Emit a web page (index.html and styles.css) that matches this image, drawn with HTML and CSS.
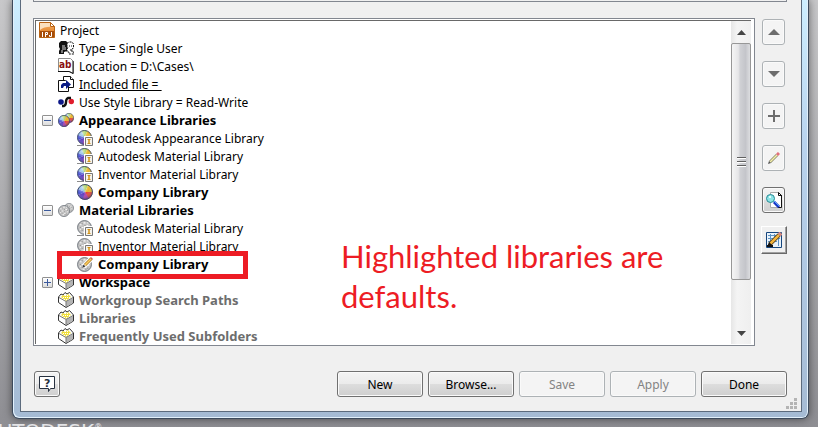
FILE: index.html
```html
<!DOCTYPE html>
<html lang="en">
<head>
   <meta charset="UTF-8">
   <meta name="viewport" content="width=device-width, initial-scale=1.0">
   <title>Projects</title>
   <link rel="stylesheet" href="styles.css">
</head>
<body>
   <!-- Shared icons -->
   <svg class="sprite" aria-hidden="true">
      <defs>
         <radialGradient id="shine" cx="35%" cy="20%" r="85%">
            <stop offset="0" stop-color="#fff" stop-opacity=".65"/>
            <stop offset=".5" stop-color="#fff" stop-opacity="0"/>
            <stop offset="1" stop-color="#102050" stop-opacity=".5"/>
         </radialGradient>
         <linearGradient id="orange" x1="0" y1="0" x2="0" y2="1">
            <stop offset="0" stop-color="#f7b26a"/>
            <stop offset="1" stop-color="#d9700f"/>
         </linearGradient>
      </defs>
      <symbol id="ball" viewBox="0 0 16 16">
         <path fill="#4a55d0" d="M8 8 1 11A7.500 7.500 0 0 1 1 5z"/>
         <path fill="#69a7dc" d="M8 8 1 5A7.500 7.500 0 0 1 6 .8z"/>
         <path fill="#8fc63c" d="M8 8 5 .8A7.500 7.500 0 0 1 11 1z"/>
         <path fill="#e8b52a" d="M8 8 11 1A7.500 7.500 0 0 1 15.500 8z"/>
         <path fill="#e8442e" d="M8 8h7.500A7.500 7.500 0 0 1 11 15z"/>
         <path fill="#b03aa8" d="M8 8l4 6.500A7.500 7.500 0 0 1 5 15z"/>
         <path fill="#5a3ec0" d="M8 8 6 15.300A7.500 7.500 0 0 1 1 11z"/>
         <circle cx="8" cy="8" r="7.500" fill="url(#shine)" stroke="#44506e"/>
      </symbol>
      <symbol id="stone" viewBox="0 0 16 16">
         <circle cx="8" cy="8" r="7.400" fill="#c4c4c4" stroke="#6a7078"/>
         <path stroke="#f8f8f8" stroke-width="1.200" d="M3 5h2M7 3h2M5 8h2M10 6h2M3 10h1M8 11h2M12 9h1M6 13h2M11 3h1"/>
         <path stroke="#808080" d="M5 4h1M8 6h1M3 8h1M8 9h1M12 7h1M5 11h1M11 12h1M9 13h1"/>
      </symbol>
      <symbol id="badge" viewBox="0 0 16 16">
         <path fill="#fff" d="M7 6h9v10H7z"/>
         <path fill="#f4f2ec" stroke="#777" d="M8.500 7.500h7v8h-7z"/>
         <path fill="none" stroke="#d29318" d="M10.500 9.500h3M10.500 13.500h3"/>
         <path stroke="#d29318" stroke-width="1.500" d="M12 9v5"/>
         <path stroke="#8b8b8b" d="M0 15.500h7"/>
      </symbol>
      <symbol id="color-lib" viewBox="0 0 16 16">
         <use href="#ball" width="15" height="15"/>
         <use href="#badge"/>
      </symbol>
      <symbol id="stone-lib" viewBox="0 0 16 16">
         <use href="#stone" width="15" height="15"/>
         <use href="#badge"/>
      </symbol>
      <symbol id="color-group" viewBox="0 0 16 16">
         <use href="#ball" x="6" y="1" width="10" height="10"/>
         <use href="#ball" y="3" width="12" height="12"/>
      </symbol>
      <symbol id="stone-group" viewBox="0 0 16 16">
         <use href="#stone" x="6" y="1" width="10" height="10"/>
         <use href="#stone" y="3" width="12" height="12"/>
      </symbol>
      <symbol id="stone-edit" viewBox="0 0 16 16">
         <use href="#stone" y="1" width="15" height="15"/>
         <path stroke="#fff" stroke-width="5" d="m7 10 8-8"/>
         <path stroke="#a87618" stroke-width="3" d="m8 9 6-6"/>
         <path stroke="#ffce62" stroke-width="1.600" d="m8 9 6-6"/>
         <path fill="#333" d="m5.500 11.500 1-3 2 2z"/>
         <path stroke="#c7654c" stroke-width="3" d="m14 3 1-1"/>
      </symbol>
      <symbol id="box" viewBox="0 0 16 16">
         <path fill="#fff" stroke="#333" d="M.500 5 3 2l2 1 2-2.500 2 1.500 2.500-1.500 4 4.500v6L8 15.500.500 10.500z"/>
         <path fill="#b4b4b4" d="M8 9.500 15 6v5l-7 4z"/>
         <path fill="#f0df3c" d="m3 5 2-2 2 1 3-2 3 3-5 4z"/>
         <path stroke="#fff" stroke-dasharray="1 1" d="M5 5.500h8M6 7.500h5M7 3.500h4"/>
         <path fill="none" stroke="#777" d="m1 5.500 7 4 7-4M8 10v5"/>
      </symbol>
      <symbol id="ipj" viewBox="0 0 16 16">
         <path fill="url(#orange)" stroke="#b96314" d="M.500.500h11l4 4v11H.500z"/>
         <path fill="#fbe0bf" d="M1 1h10l3 4Q6 4 1 8z"/>
         <path fill="#fff" stroke="#b96314" d="M11.500.500v4h4z"/>
         <path fill="#a74c08" d="M1 9h14v6H1z"/>
         <path fill="none" stroke="#fff" d="M3.500 10v5M6.500 15v-4.500h2v2h-2M12.500 10v4.500h-2V13"/>
      </symbol>
      <symbol id="users" viewBox="0 0 16 16">
         <path fill="#111" d="M1 3 3 1h5l2 2v3L9 8v3l-3 1v2H1v-3l1-2-1-2z"/>
         <path fill="#777" d="M4 5h3v2h1v3H5v3H3v-3h1z"/>
         <path fill="#fff" stroke="#111" stroke-dasharray="2 1" d="M9 3.500 11 2h3l1.500 2v4L14 9v3h2v2h-5v-2H9V9l1-1-1-2z"/>
         <path stroke="#111" d="M11 6h1M13 6h1M12 10h2"/>
      </symbol>
      <symbol id="include" viewBox="0 0 16 16">
         <path fill="#fff" stroke="#111" d="M5.500.500h7l3 3v8h-10z"/>
         <path fill="#fff" stroke="#111" d="M12.500.500v3h3"/>
         <path fill="#fff" stroke="#111" d="M.500 4.500h7l3 3v8h-10z"/>
         <path fill="#0a1c86" d="M3 12V9l2-2h3V4l5 4.500L8 13v-3H6l-1 2z"/>
      </symbol>
      <symbol id="style" viewBox="0 0 16 16">
         <circle cx="3" cy="8" r="2.800" fill="#0c1788"/>
         <circle cx="13.300" cy="7.500" r="2.700" fill="#e01c2c"/>
         <path fill="none" stroke="#111" stroke-width="2.400" d="M4 12h2q2-1 2-4t2-4h3"/>
      </symbol>
   </svg>

   <div class="window">
      <main class="client">
         <div class="upper-pane"></div>

         <div class="middle">
            <div class="tree-frame">
               <ul class="tree">
                  <li class="row root"><svg class="icon"><use href="#ipj"/></svg>Project</li>
                  <li class="row"><svg class="icon"><use href="#users"/></svg>Type = Single User</li>
                  <li class="row"><svg class="icon"><path fill="#fff" stroke="#8d8d8d" d="M.500.500h12l3 3v12l-4-2H.500z"/><path fill="none" stroke="#111" d="M0 13.500h11l4 2V3"/><text x="1" y="10" class="icon-text">ab</text></svg>Location = D:\Cases\</li>
                  <li class="row"><svg class="icon"><use href="#include"/></svg><a href="#">Included file =&nbsp;</a></li>
                  <li class="row"><svg class="icon"><use href="#style"/></svg>Use Style Library = Read-Write</li>
                  <li class="row group bold"><button class="expander" aria-label="Collapse Appearance Libraries"></button><svg class="icon"><use href="#color-group"/></svg>Appearance Libraries</li>
                  <li class="row leaf"><svg class="icon"><use href="#color-lib"/></svg>Autodesk Appearance Library</li>
                  <li class="row leaf"><svg class="icon"><use href="#color-lib"/></svg>Autodesk Material Library</li>
                  <li class="row leaf"><svg class="icon"><use href="#color-lib"/></svg>Inventor Material Library</li>
                  <li class="row leaf bold"><svg class="icon"><use href="#ball"/></svg>Company Library</li>
                  <li class="row group bold"><button class="expander" aria-label="Collapse Material Libraries"></button><svg class="icon"><use href="#stone-group"/></svg>Material Libraries</li>
                  <li class="row leaf"><svg class="icon"><use href="#stone-lib"/></svg>Autodesk Material Library</li>
                  <li class="row leaf"><svg class="icon"><use href="#stone-lib"/></svg>Inventor Material Library</li>
                  <li class="row leaf bold marked"><svg class="icon"><use href="#stone-edit"/></svg>Company Library</li>
                  <li class="row group bold"><button class="expander closed" aria-label="Expand Workspace"></button><svg class="icon"><use href="#box"/></svg>Workspace</li>
                  <li class="row bold muted"><svg class="icon"><use href="#box"/></svg>Workgroup Search Paths</li>
                  <li class="row bold muted"><svg class="icon"><use href="#box"/></svg>Libraries</li>
                  <li class="row bold muted"><svg class="icon"><use href="#box"/></svg>Frequently Used Subfolders</li>
               </ul>
               <p class="note">Highlighted libraries are defaults.</p>
               <div class="scrollbar">
                  <button class="scroll-arrow" aria-label="Scroll up"><svg width="9" height="5"><path fill="#444" d="M0 5 4.500 0 9 5z"/></svg></button>
                  <div class="scroll-track"><div class="thumb"><span class="grip"></span></div></div>
                  <button class="scroll-arrow" aria-label="Scroll down"><svg width="9" height="5"><path fill="#444" d="M0 0h9L4.500 5z"/></svg></button>
               </div>
            </div>

            <div class="side">
               <button class="btn tool" disabled aria-label="Move up"><svg width="12" height="6"><path fill="#6d6d6d" d="M0 6 6 0l6 6z"/></svg></button>
               <button class="btn tool" disabled aria-label="Move down"><svg width="12" height="6"><path fill="#6d6d6d" d="M0 0h12L6 6z"/></svg></button>
               <button class="btn tool" disabled aria-label="Add"><svg width="12" height="12"><path stroke="#6d6d6d" stroke-width="2" d="M0 6h12M6 0v12"/></svg></button>
               <button class="btn tool" disabled aria-label="Edit"><svg width="12" height="12"><path stroke="#8a8a70" stroke-width="3" d="m2 10 7-7"/><path stroke="#f5f0a8" stroke-width="1.500" d="m2 10 7-7"/><path stroke="#e2707c" stroke-width="3" d="m9 3 2-2"/><path fill="#555" d="m0 12 1-3 2 2z"/></svg></button>
               <button class="btn tool" aria-label="Check paths"><svg width="16" height="16"><path fill="#fff" stroke="#aaa" d="M4.500.500h8l3 3v12h-11z"/><path fill="#fff" stroke="#111" d="M12.500.500v3h3zM15.500 3v12.500H12"/><path stroke="#1735c4" stroke-width="3" d="m8 10 5 5"/><path stroke="#59a3ff" d="m8 9 5 5"/><circle cx="4.500" cy="6.500" r="4" fill="#8de4e6" stroke="#268a94"/><path stroke="#e4ffff" stroke-width="2" d="M3 5h2"/></svg></button>
               <button class="tool classic" aria-label="Configure libraries"><svg width="16" height="16"><path fill="#e9f3fb" stroke="#16467e" d="M.500.500h15v15H.500z"/><path fill="none" stroke="#5d92c4" d="M2 3.500h12M2 6.500h12M2 9.500h9M4.500 2v12M8.500 2v8M12.500 2v12"/><path stroke="#4a3512" stroke-width="4" d="m4 12 9-9"/><path stroke="#f3b43c" stroke-width="2.500" d="m4 12 9-9"/><path stroke="#d58a80" stroke-width="4" d="m13 3 2-2"/><path fill="#111" d="m1 15 2-5 3 3z"/><path stroke="#111" stroke-width="2" d="M1 14h6"/></svg></button>
            </div>
         </div>

         <div class="footer">
            <button class="btn help" aria-label="Help"><svg width="16" height="16"><path fill="#fff" stroke="#26303e" d="M.500.500h15v12h-4l-2 3v-3h-9z"/><text x="5" y="11" class="help-text">?</text></svg></button>
            <button class="btn">New</button>
            <button class="btn">Browse...</button>
            <button class="btn" disabled>Save</button>
            <button class="btn" disabled>Apply</button>
            <button class="btn">Done</button>
         </div>
         <svg class="resize" width="11" height="11"><path stroke="#b4b4b4" stroke-width="3" stroke-dasharray="3 1" d="M8 1.500h3M4 5.500h7M0 9.500h11"/></svg>
      </main>
   </div>
   <div class="brand">AUTODESK<sup>®</sup></div>
</body>
</html>
```
FILE: styles.css
```css
*,
*::after {
   box-sizing: border-box;
}

body {
   margin: 0;
   height: 100vh;
   overflow: hidden;
   display: flex;
   flex-direction: column;
   font-family: "Noto Sans", sans-serif;
   font-size: 12px;
   color: #000;
   background: linear-gradient(#c8c8ca, #a5a5a8 60%, #8e8e93);
}

button {
   font: inherit;
   padding: 0;
}

svg {
   display: block;
}

.sprite {
   position: absolute;
   width: 0;
   height: 0;
}

/* Window frame */
.window {
   flex: 1;
   min-height: 0;
   display: flex;
   margin: 0 9px 0 12px;
   padding: 0 6px 6px 7px;
   border: 1px solid #3c4a5c;
   border-top: 0;
   border-radius: 0 0 7px 7px;
   background: linear-gradient(#cdeeff, #b9d3ee 35%, #a5bbd4);
   box-shadow: inset 1px -1px 0 #e2f0fb, inset -1px 0 0 #e2f0fb, 0 0 8px rgba(0, 0, 0, .5);
}

.client {
   position: relative;
   flex: 1;
   min-width: 0;
   display: flex;
   flex-direction: column;
   padding: 0 14px 14px 12px;
   border: 1px solid #5c6b7d;
   border-top: 0;
   background: #f0f0f0;
}

.upper-pane {
   height: 2px;
   border: 1px solid #828790;
   border-top: 0;
}

.middle {
   flex: 1;
   min-height: 0;
   display: flex;
   gap: 7px;
   margin-top: 16px;
}

/* Tree */
.tree-frame {
   position: relative;
   flex: 1;
   min-width: 0;
   display: flex;
   border: 1px solid #828790;
   padding: 1px 3px 1px 1px;
   background: #fff;
}

.tree {
   flex: 1;
   margin: 0;
   padding: 0;
   overflow: hidden;
   list-style: none;
   border-top: 1px solid #696969;
   border-left: 1px solid #696969;
}

.row {
   display: flex;
   align-items: center;
   gap: 5px;
   height: 18px;
   padding-left: 22px;
   white-space: nowrap;
}

.root {
   padding-left: 3px;
}

.group {
   padding-left: 6px;
}

.leaf {
   padding-left: 41px;
}

.bold {
   font-size: 13px;
   font-weight: bold;
}

.muted {
   color: #6d6d6d;
}

.row a {
   color: inherit;
}

.icon {
   width: 16px;
   height: 16px;
   flex: none;
}

.icon-text {
   font: bold 10px "DejaVu Sans Condensed", sans-serif;
   fill: #8b1010;
}

.expander {
   width: 11px;
   height: 11px;
   border: 1px solid #919191;
   border-radius: 1px;
   background: linear-gradient(#3c5a9c, #3c5a9c) center / 7px 1px no-repeat, linear-gradient(#fff, #dcdcdc);
}

.closed {
   background: linear-gradient(#3c5a9c, #3c5a9c) center / 7px 1px no-repeat, linear-gradient(#3c5a9c, #3c5a9c) center / 1px 7px no-repeat, linear-gradient(#fff, #dcdcdc);
}

/* Red frame drawn over the neighbouring rows */
.marked {
   position: relative;
}

.marked::after {
   content: "";
   position: absolute;
   left: 21px;
   top: -4px;
   width: 191px;
   height: 28px;
   border: 5px solid #ed1c24;
}

.note {
   position: absolute;
   left: 307px;
   top: 217px;
   width: 350px;
   margin: 0;
   font: 31px/40px Lato, Carlito, sans-serif;
   color: #ed1c24;
}

.scrollbar {
   width: 20px;
   display: flex;
   flex-direction: column;
   border-top: 1px solid #696969;
   background: linear-gradient(90deg, #e6e6e6, #f4f4f4 30%, #efefef);
}

.scroll-arrow {
   height: 22px;
   display: flex;
   align-items: center;
   justify-content: center;
   border: 0;
   background: none;
}

.scroll-track {
   flex: 1;
}

.thumb {
   height: 85%;
   display: flex;
   align-items: center;
   justify-content: center;
   border: 1px solid #979797;
   border-radius: 2px;
   background: linear-gradient(90deg, #f5f5f5, #e6e6e8 35%, #d0d1d5 45%, #c4c5ca 75%, #dcdde0);
}

.grip {
   width: 9px;
   height: 10px;
   background: repeating-linear-gradient(#606060 0 1px, #fff 1px 2px, transparent 2px 4px);
}

/* Buttons */
.btn {
   width: 86px;
   height: 26px;
   display: flex;
   align-items: center;
   justify-content: center;
   border: 1px solid #707070;
   border-radius: 3px;
   background: linear-gradient(#f3f3f3, #ebebeb 49%, #dddddd 50%, #cfcfcf);
   box-shadow: inset 0 0 0 1px #fafafa;
   color: #000;
}

.btn:disabled {
   border-color: #adb2b5;
   background: #f4f4f4;
   color: #838383;
}

.side {
   width: 25px;
   display: flex;
   flex-direction: column;
   gap: 16px;
   padding-top: 1px;
}

.side .tool {
   width: 23px;
}

.side .classic {
   height: 28px;
   width: 26px;
   margin: -3px -1px;
   display: flex;
   align-items: center;
   justify-content: center;
   border: 1px solid;
   border-color: #fff #696969 #696969 #fff;
   box-shadow: inset -1px -1px 0 #a0a0a0;
   background: #f0f0f0;
}

.footer {
   display: flex;
   gap: 5px;
   margin-top: 25px;
   padding-left: 1px;
}

.footer .help {
   width: 26px;
   margin-right: auto;
}

.help-text {
   font: bold 11px "DejaVu Sans", sans-serif;
   fill: #26303e;
}

.resize {
   position: absolute;
   right: 4px;
   bottom: 2px;
}

.brand {
   height: 8px;
   margin-left: -16px;
   padding-top: 2px;
   font: 20px/20px "DejaVu Sans", sans-serif;
   color: #e4e4e6;
}

.brand sup {
   font-size: 8px;
   line-height: 1;
}
```
